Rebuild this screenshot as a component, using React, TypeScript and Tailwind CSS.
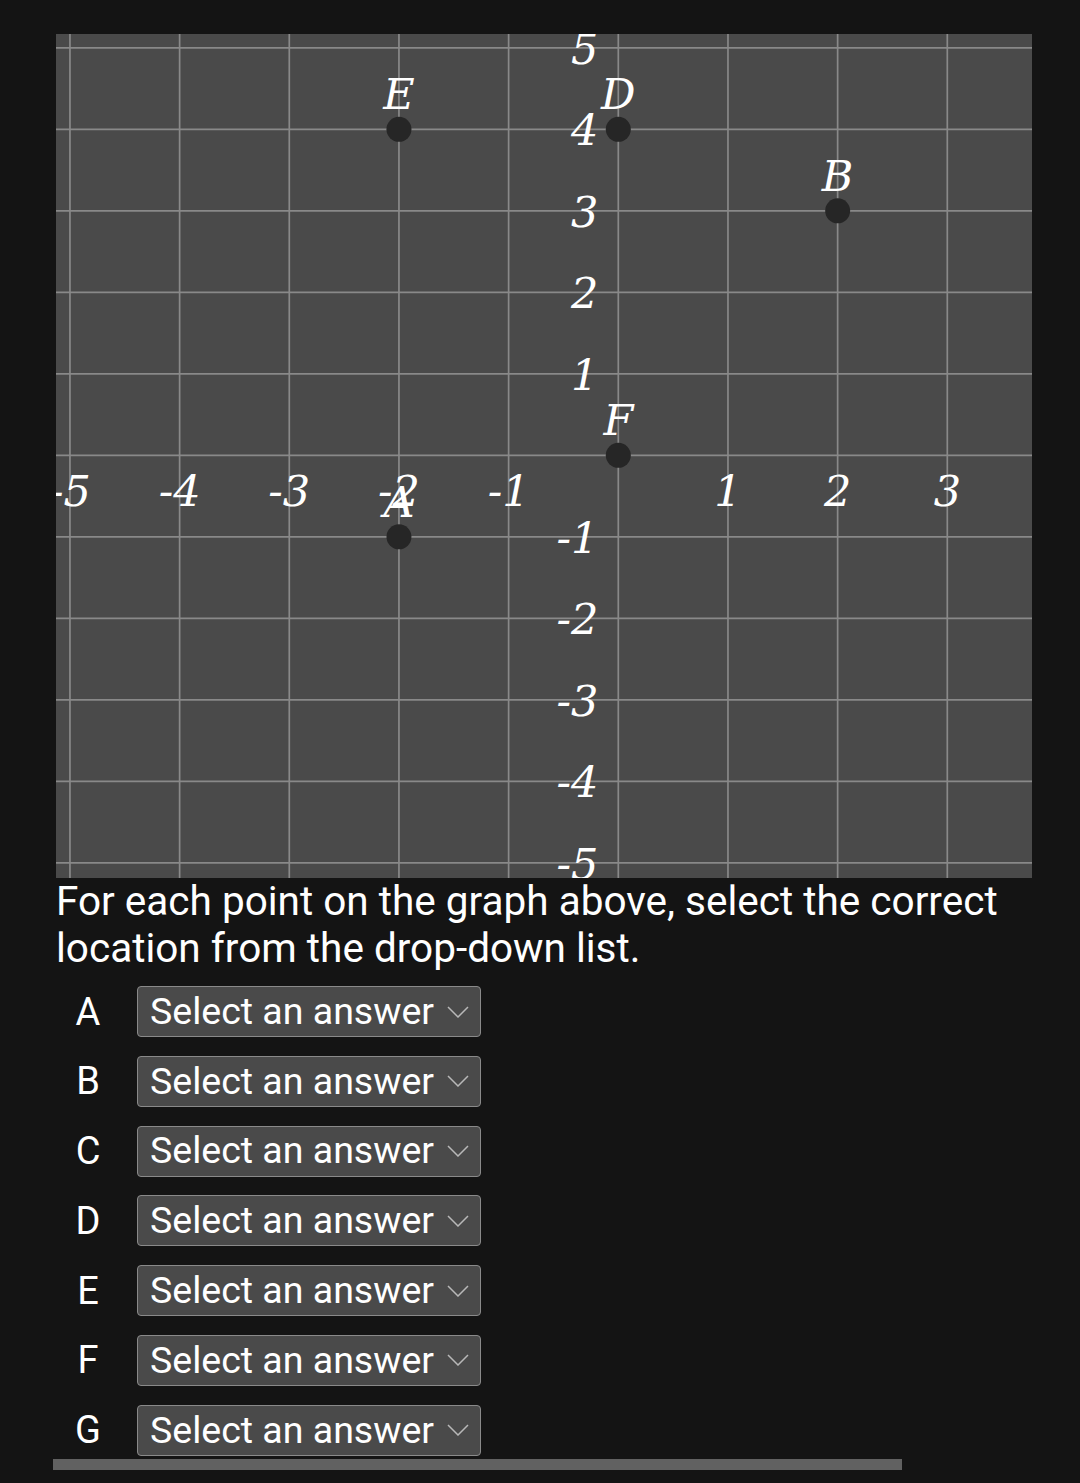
import React from "react";

const UX = 109.67;
const UY = 81.5;
const OX = 562.3;
const OY = 421.3;
const fx = (x: number) => OX + UX * x;
const fy = (y: number) => OY - UY * y;

const xs = [-5, -4, -3, -2, -1, 0, 1, 2, 3];
const ys = [5, 4, 3, 2, 1, 0, -1, -2, -3, -4, -5];

const points: { n: string; x: number; y: number }[] = [
  { n: "E", x: -2, y: 4 },
  { n: "D", x: 0, y: 4 },
  { n: "B", x: 2, y: 3 },
  { n: "F", x: 0, y: 0 },
  { n: "A", x: -2, y: -1 },
];

const fmt = (v: number) => (v < 0 ? `-${Math.abs(v)}` : `${v}`);

function Graph() {
  const font = {
    fontFamily: '"DejaVu Serif", serif',
    fontStyle: "italic" as const,
    fontSize: 43,
    fill: "#ffffff",
  };
  return (
    <div className="w-[976px] h-[844px] bg-[#4a4a4a] overflow-hidden">
      <svg width="976" height="844" viewBox="0 0 976 844">
        {xs.map((x) => (
          <line key={"vx" + x} x1={fx(x)} x2={fx(x)} y1={0} y2={844} stroke="#898989" strokeWidth={1.7} />
        ))}
        {ys.map((y) => (
          <line key={"hy" + y} x1={0} x2={976} y1={fy(y)} y2={fy(y)} stroke="#898989" strokeWidth={1.7} />
        ))}
        {xs
          .filter((x) => x !== 0)
          .map((x) => (
            <text key={"lx" + x} x={fx(x)} y={fy(0) + 51} textAnchor="middle" style={font}>
              {fmt(x)}
            </text>
          ))}
        {ys
          .filter((y) => y !== 0)
          .map((y) => (
            <text key={"ly" + y} x={fx(0) - 20} y={fy(y) + 16} textAnchor="end" style={font}>
              {fmt(y)}
            </text>
          ))}
        {points.map((p) => (
          <g key={p.n}>
            <circle cx={fx(p.x)} cy={fy(p.y)} r={12.5} fill="#262626" />
            <text x={fx(p.x)} y={fy(p.y) - 20} textAnchor="middle" style={font}>
              {p.n}
            </text>
          </g>
        ))}
      </svg>
    </div>
  );
}

function Chevron() {
  return (
    <svg width="22" height="12" viewBox="0 0 22 12" className="shrink-0">
      <polyline points="1,1 11,11 21,1" fill="none" stroke="#b8b8b8" strokeWidth="1.5" />
    </svg>
  );
}

export default function App() {
  const letters = ["A", "B", "C", "D", "E", "F", "G"];
  return (
    <div
      className="min-h-[1483px] w-full bg-[#141414] text-white"
      style={{ fontFamily: 'Roboto, "Liberation Sans", sans-serif' }}
    >
      <div className="pt-[34px] pl-[56px]">
        <Graph />
        <p className="w-[961px] text-[40.5px] leading-[47px] text-white">
          For each point on the graph above, select the correct location from the drop-down list.
        </p>
        <div className="mt-[14px] flex flex-col gap-[18.8px]">
          {letters.map((l) => (
            <div key={l} className="flex items-center">
              <div className="ml-[8px] w-[48px] text-center text-[38px] leading-none">{l}</div>
              <div className="ml-[25px] flex h-[51px] w-[344px] items-center justify-between rounded-[4px] border border-[#8a8a8a] bg-[#4a4a4a] pl-[12px] pr-[11px]">
                <span className="text-[37.5px] leading-none text-white">Select an answer</span>
                <Chevron />
              </div>
            </div>
          ))}
        </div>
        <div className="mt-[3px] -ml-[3px] h-[11px] w-[849px] bg-[#616161]" />
      </div>
    </div>
  );
}
